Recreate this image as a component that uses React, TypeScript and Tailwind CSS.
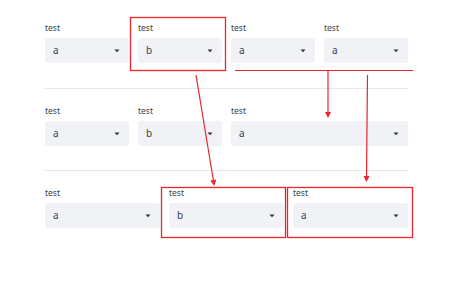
import React from "react";

function Select({ label, value }: { label: string; value: string }) {
  return (
    <div className="flex flex-col">
      <div className="h-[16px] text-[8.5px] leading-[11px] text-[#3d3f4a]">{label}</div>
      <div className="flex h-[25px] items-center justify-between rounded-[3px] bg-[#f0f2f6] pl-[8px] pr-[9px]">
        <span className="text-[10px] text-[#3d3f4a]">{value}</span>
        <svg width="6" height="4" viewBox="0 0 6 4">
          <path d="M0.5 0.5 L5.5 0.5 L3 3.3 Z" fill="#31333f" />
        </svg>
      </div>
    </div>
  );
}

function Annotations() {
  const red = "#e8262b";
  return (
    <svg className="pointer-events-none absolute inset-0" width="474" height="281" viewBox="0 0 474 281">
      <rect x="130.5" y="17.5" width="95" height="53" fill="none" stroke={red} strokeWidth="1.3" />
      <rect x="161.5" y="187.5" width="124" height="50" fill="none" stroke={red} strokeWidth="1.3" />
      <rect x="287.5" y="187.5" width="125" height="50" fill="none" stroke={red} strokeWidth="1.3" />
      <line x1="235" y1="70.5" x2="413" y2="70.5" stroke={red} strokeWidth="1.2" />
      <line x1="328" y1="70.5" x2="328" y2="112" stroke={red} strokeWidth="1.2" />
      <path d="M325 112 L331 112 L328 118 Z" fill={red} />
      <line x1="367.5" y1="75" x2="366.5" y2="176" stroke={red} strokeWidth="1.2" />
      <path d="M363.5 176 L369.5 176 L366.5 182 Z" fill={red} />
      <line x1="196" y1="75" x2="213.3" y2="180" stroke={red} strokeWidth="1.2" />
      <path d="M210.3 180.5 L216.3 179.5 L214.2 186 Z" fill={red} />
    </svg>
  );
}

export default function App() {
  return (
    <div
      className="relative h-[281px] w-[474px] overflow-hidden bg-white"
      style={{ fontFamily: '"Source Sans Pro", "Noto Sans", "Open Sans", sans-serif' }}
    >
      <div className="w-[408px] pl-[45px] pt-[22px]">
        <div className="grid grid-cols-4 gap-[9px]">
          <Select label="test" value="a" />
          <Select label="test" value="b" />
          <Select label="test" value="a" />
          <Select label="test" value="a" />
        </div>
        <div className="mb-[16px] mt-[25px] h-px bg-[#e6e7ea]" />
        <div className="grid grid-cols-[84px_84px_1fr] gap-[9px]">
          <Select label="test" value="a" />
          <Select label="test" value="b" />
          <Select label="test" value="a" />
        </div>
        <div className="mb-[16px] mt-[24px] h-px bg-[#e6e7ea]" />
        <div className="grid grid-cols-3 gap-[9px]">
          <Select label="test" value="a" />
          <Select label="test" value="b" />
          <Select label="test" value="a" />
        </div>
      </div>
      <Annotations />
    </div>
  );
}
